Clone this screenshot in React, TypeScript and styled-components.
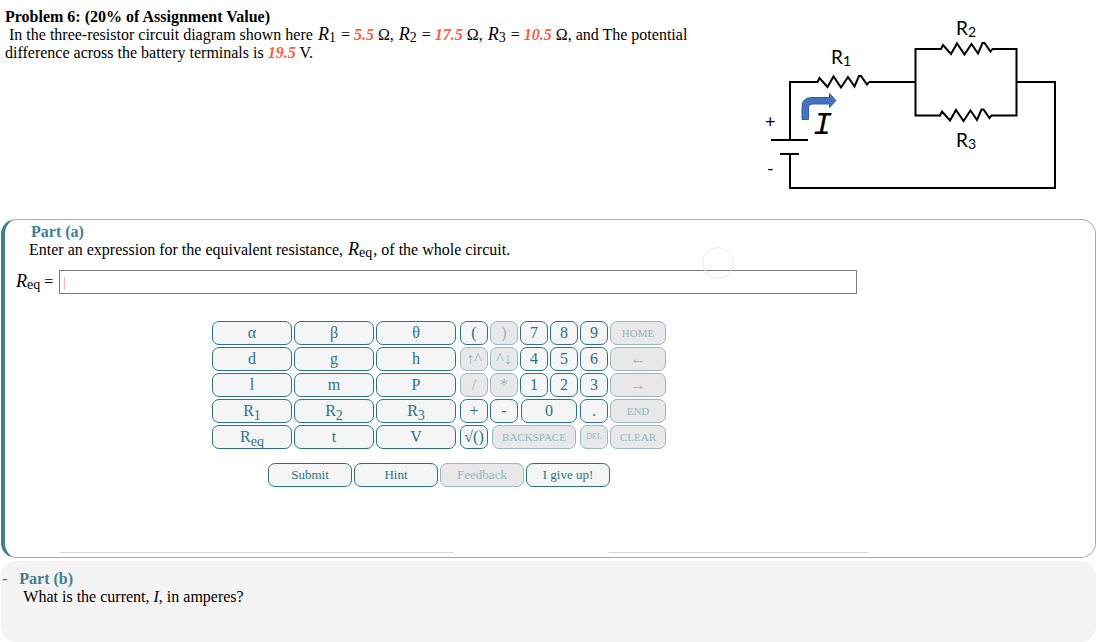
import React from "react";
import styled, { createGlobalStyle, css } from "styled-components";

const teal = "#2b7285";
const fadedTeal = "#94b9c2";

const GlobalStyle = createGlobalStyle`
  * { box-sizing: border-box; }
  body {
    margin: 0;
    background: #fff;
    color: #000;
    font: 16px/18px "Liberation Serif", "Times New Roman", serif;
  }
`;

const Page = styled.main`
  padding: 0 5px 0 1px;
`;

const Problem = styled.header`
  display: flex;
  justify-content: space-between;
  align-items: flex-start;
  min-height: 219px;
  padding: 8px 0 0 4px;
`;

const Statement = styled.div`
  flex: 0 1 700px;
  margin-right: 16px;
`;

const ProblemTitle = styled.h1`
  margin: 0;
  font-size: 16px;
  line-height: 18px;
`;

const Text = styled.p<{ $indent?: number }>`
  margin: 0;
  text-indent: ${(p) => p.$indent ?? 0}px;
`;

const Value = styled.em`
  color: #ff5c40;
  font-weight: bold;
`;

const Variable = styled.span`
  margin: 0 1px;
  line-height: 1;

  i {
    font-size: 18px;
    line-height: 0;
  }

  sub {
    font-size: 14px;
    line-height: 0;
    vertical-align: -2px;
  }
`;

const Circuit = styled.svg`
  flex: none;
  width: 346px;
  height: 190px;
  margin-top: 2px;
`;

const panel = css`
  border-radius: 15px;
`;

const ActivePart = styled.section`
  ${panel}
  display: flex;
  flex-direction: column;
  min-height: 339px;
  border: 1px solid #aaa;
  border-left: 4px solid #3b808c;
  padding: 3px 11px 4px;
`;

const ClosedPart = styled.section`
  ${panel}
  display: flex;
  gap: 12px;
  min-height: 81px;
  margin-top: 3px;
  padding: 9px 0 0 1px;
  background: #f4f4f4;
`;

const PartTitle = styled.h2`
  margin: 0;
  font-size: 16px;
  line-height: 18px;
  color: #3f7f91;
`;

const PartIntro = styled.div`
  padding-left: 13px;

  ${PartTitle} { padding-left: 2px; }
`;

const Dash = styled.span`
  color: #3f7f91;
`;

const Work = styled.form`
  display: flex;
  flex-direction: column;
  align-items: center;
  width: 100%;
  max-width: 846px;
  margin-top: 11px;
`;

const AnswerRow = styled.div`
  position: relative;
  display: flex;
  align-items: center;
  width: 100%;
  padding-right: 5px;
`;

const AnswerLabel = styled.label`
  flex: none;
  width: 43px;
  white-space: nowrap;

  ${Variable} { margin: 0; }
`;

const AnswerInput = styled.input`
  flex: 1;
  min-width: 0;
  height: 24px;
  border: 1px solid #7b7b7b;
  border-radius: 0;
  padding: 0 3px;
  background: #fff;
  color: #ff9c9c;
  font: 15px/18px "Liberation Serif", serif;
  outline: none;
`;

const Ripple = styled.span`
  position: absolute;
  top: -23px;
  right: 128px;
  width: 32px;
  height: 32px;
  border: 1px solid #ececec;
  border-radius: 50%;
  pointer-events: none;
`;

const Keypad = styled.div`
  display: flex;
  gap: 4px;
  margin-top: 27px;
`;

const SymbolKeys = styled.div`
  display: grid;
  grid-template-columns: repeat(3, 80px);
  grid-auto-rows: 24px;
  gap: 2px;
`;

const NumberKeys = styled.div`
  display: grid;
  grid-template-columns: repeat(5, 28px) 56px;
  grid-auto-rows: 24px;
  gap: 2px;
`;

type KeySize = "small" | "medium" | "large";
const keyFont = { small: 8, medium: 11, large: 16 };

const Button = styled.button<{ $size?: KeySize; $span?: number }>`
  display: flex;
  justify-content: center;
  align-items: center;
  height: 24px;
  border: 1px solid ${teal};
  border-radius: 7px;
  padding: 0;
  background: #f5f5f5;
  color: ${teal};
  font-family: "Liberation Serif", "Times New Roman", serif;
  font-size: ${(p) => keyFont[p.$size ?? "large"]}px;
  line-height: 18px;
  white-space: nowrap;
  grid-column: span ${(p) => p.$span ?? 1};
  margin: 0 ${(p) => (p.$span ?? 1) - 1}px;

  sub {
    font-size: 14px;
    line-height: 0;
    vertical-align: -4px;
  }

  &:disabled {
    border-color: ${fadedTeal};
    background: #e8e8e8;
    color: ${fadedTeal};
  }
`;

const Actions = styled.div`
  display: flex;
  gap: 2px;
  margin-top: 14px;
`;

const ActionButton = styled(Button)`
  width: 84px;
  font-size: 13px;
`;

const Rules = styled.div`
  display: grid;
  grid-template-columns: 395fr 155fr 260fr;
  width: 100%;
  max-width: 853px;
  margin-top: auto;
  padding-left: 43px;
`;

const Rule = styled.hr<{ $column: number }>`
  grid-column: ${(p) => p.$column};
  width: 100%;
  height: 1px;
  margin: 0;
  border: 0;
  background: #d6d6d6;
`;

const Var = ({ name, sub }: { name: string; sub: string }) => (
  <Variable>
    <i>{name}</i>
    <sub>{sub}</sub>
  </Variable>
);

const symbols: React.ReactNode[] = [
  "α", "β", "θ",
  "d", "g", "h",
  "l", "m", "P",
  <span>R<sub>1</sub></span>, <span>R<sub>2</sub></span>, <span>R<sub>3</sub></span>,
  <span>R<sub>eq</sub></span>, "t", "V",
];

type Key = { label: string; off?: boolean; size?: KeySize; span?: number };

const numbers: Key[] = [
  { label: "(" }, { label: ")", off: true }, { label: "7" }, { label: "8" }, { label: "9" },
  { label: "HOME", off: true, size: "medium" },
  { label: "↑^", off: true }, { label: "^↓", off: true }, { label: "4" }, { label: "5" }, { label: "6" },
  { label: "←", off: true },
  { label: "/", off: true }, { label: "*", off: true }, { label: "1" }, { label: "2" }, { label: "3" },
  { label: "→", off: true },
  { label: "+" }, { label: "-" }, { label: "0", span: 2 }, { label: "." },
  { label: "END", off: true, size: "medium" },
  { label: "√()" }, { label: "BACKSPACE", off: true, size: "medium", span: 3 },
  { label: "DEL", off: true, size: "small" }, { label: "CLEAR", off: true, size: "medium" },
];

const Resistor = ({ x, y }: { x: number; y: number }) => (
  <path
    transform={`translate(${x} ${y})`}
    d="M0 0h1L3 -4L11 5L17 -5.500L24.500 5.500L31.500 -5L38 4.500L42.500 -6H44.500L50.500 2.500L52.500 0"
    strokeWidth="2"
  />
);

const CircuitLabel = ({ x, y, n }: { x: number; y: number; n: number }) => (
  <text x={x} y={y} fontSize="19">
    R<tspan fontSize="14" dy="2">{n}</tspan>
  </text>
);

const CircuitDiagram = () => (
  <Circuit viewBox="0 0 346 190" role="img" aria-label="Three-resistor circuit">
    <g fill="none" stroke="#000" strokeWidth="2">
      <path d="M40 130V72H67" />
      <path d="M119 72H165.500" />
      <path d="M191 39H165.500V105.500H190" />
      <path d="M242 39H266.500V105.500H241" />
      <path d="M266.500 72H305V178H40V144" />
      <path d="M21 130H58M30 144H49" />
      <Resistor x={66.5} y={72} />
      <Resistor x={190} y={39} />
      <Resistor x={189} y={105.5} />
    </g>
    <path
      d="M52 109.500V97Q52 87.500 62 87.500H79.500V83.500L86 90.500L79.500 97.500V94H63Q58.500 94 58.500 98V109.500Z"
      fill="#4472c4"
      stroke="#355f9f"
    />
    <g fontFamily="Lato, sans-serif" fill="#000">
      <CircuitLabel x={81} y={54} n={1} />
      <CircuitLabel x={206} y={25} n={2} />
      <CircuitLabel x={206} y={137} n={3} />
      <text x="15" y="118" fontSize="18">+</text>
      <text x="17" y="165" fontSize="18">-</text>
    </g>
    <text x="63" y="124" fontSize="32" fontStyle="italic" fontFamily="Liberation Mono, monospace">I</text>
  </Circuit>
);

export default function App() {
  return (
    <Page>
      <GlobalStyle />
      <Problem>
        <Statement>
          <ProblemTitle>Problem 6: (20% of Assignment Value)</ProblemTitle>
          <Text $indent={4}>
            In the three-resistor circuit diagram shown here <Var name="R" sub="1" /> = <Value>5.5</Value> Ω,{" "}
            <Var name="R" sub="2" /> = <Value>17.5</Value> Ω, <Var name="R" sub="3" /> = <Value>10.5</Value> Ω, and
            The potential difference across the battery terminals is <Value>19.5</Value> V.
          </Text>
        </Statement>
        <CircuitDiagram />
      </Problem>

      <ActivePart>
        <PartIntro>
          <PartTitle>Part (a)</PartTitle>
          <Text>
            Enter an expression for the equivalent resistance, <Var name="R" sub="eq" />, of the whole circuit.
          </Text>
        </PartIntro>
        <Work onSubmit={(e) => e.preventDefault()}>
          <AnswerRow>
            <AnswerLabel htmlFor="answer">
              <Var name="R" sub="eq" /> =
            </AnswerLabel>
            <AnswerInput id="answer" type="text" defaultValue="|" />
            <Ripple />
          </AnswerRow>
          <Keypad>
            <SymbolKeys>
              {symbols.map((label, i) => (
                <Button type="button" key={i}>{label}</Button>
              ))}
            </SymbolKeys>
            <NumberKeys>
              {numbers.map((k) => (
                <Button type="button" key={k.label} disabled={k.off} $size={k.size} $span={k.span}>
                  {k.label}
                </Button>
              ))}
            </NumberKeys>
          </Keypad>
          <Actions>
            <ActionButton type="submit">Submit</ActionButton>
            <ActionButton type="button">Hint</ActionButton>
            <ActionButton type="button" disabled>Feedback</ActionButton>
            <ActionButton type="button">I give up!</ActionButton>
          </Actions>
        </Work>
        <Rules>
          <Rule $column={1} />
          <Rule $column={3} />
        </Rules>
      </ActivePart>

      <ClosedPart>
        <Dash>-</Dash>
        <div>
          <PartTitle>Part (b)</PartTitle>
          <Text $indent={4}>What is the current, <i>I</i>, in amperes?</Text>
        </div>
      </ClosedPart>
    </Page>
  );
}
